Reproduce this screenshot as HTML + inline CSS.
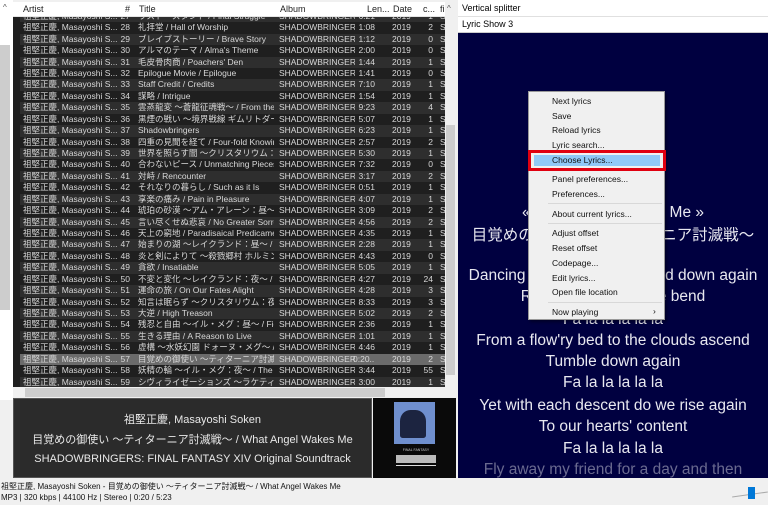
<!DOCTYPE html>
<html><head><meta charset="utf-8"><style>
*{margin:0;padding:0;box-sizing:border-box}
body{width:768px;height:505px;overflow:hidden;background:#f0f0f0;font-family:"Liberation Sans","Noto Sans CJK JP",sans-serif;position:relative}
.a{position:absolute}
.hdr{position:absolute;top:2px;left:13px;width:432px;height:15px;background:#fff;border-bottom:1px solid #e5e5e5;font-size:9px;color:#222;z-index:2}
.hdr span{position:absolute;top:2px}
.row{position:absolute;left:20px;width:425px;height:11.43px;font-size:8.5px;color:#d8d8d8;line-height:11.4px;white-space:nowrap;overflow:hidden}
.row span{position:absolute;top:0;overflow:hidden;white-space:nowrap}
.lyr{position:absolute;left:458px;width:310px;text-align:center;font-size:15.5px;color:#e8e8f0;white-space:nowrap}
.mi{position:absolute;left:552px;font-size:8.5px;color:#111}
.sep{position:absolute;left:548px;width:114px;height:1px;background:#d8d8d8}
</style></head><body>
<div class="a" style="left:0;top:0;width:13px;height:400px;background:#fff"></div>
<div class="a" style="left:0;top:45px;width:10px;height:265px;background:#cdcdcd"></div>
<div class="a" style="left:3px;top:3px;font-size:8px;color:#555">^</div>
<div class="a" style="left:13px;top:2px;width:432px;height:385px;background:#1e1e1e;overflow:hidden" id="list"></div>
<div class="hdr">
<span style="left:10px">Artist</span><span style="left:112px">#</span><span style="left:126px">Title</span><span style="left:267px">Album</span><span style="left:354px">Len...</span><span style="left:380px">Date</span><span style="left:410px">c...</span><span style="left:427px">fi</span>
</div>
<div id="rows"></div>
<div class="a" style="left:445px;top:2px;width:11px;height:385px;background:#f0f0f0"></div>
<div class="a" style="left:446px;top:125px;width:9px;height:250px;background:#cdcdcd"></div>
<div class="a" style="left:447px;top:4px;font-size:8px;color:#555">^</div>
<div class="a" style="left:13px;top:387px;width:443px;height:11px;background:#f0f0f0"></div>
<div class="a" style="left:25px;top:388px;width:360px;height:9px;background:#cdcdcd"></div>
<div class="a" style="left:13px;top:398px;width:359px;height:80px;background:#2b2b2b;border:1px solid #555;color:#e8e8e8;font-size:11px;text-align:center;line-height:19.5px;padding-top:12px">
祖堅正慶, Masayoshi Soken<br>目覚めの御使い 〜ティターニア討滅戦〜 / What Angel Wakes Me<br>SHADOWBRINGERS: FINAL FANTASY XIV Original Soundtrack</div>
<div class="a" style="left:373px;top:398px;width:83px;height:80px;background:#0a0a0a"></div>
<div class="a" style="left:394px;top:402px;width:41px;height:42px;background:#6f8fce"></div>
<div class="a" style="left:400px;top:410px;width:26px;height:28px;background:#1c2440;border-radius:40% 40% 10% 10%"></div>
<div class="a" style="left:396px;top:448px;width:40px;font-size:3.5px;color:#ccc;text-align:center">FINAL FANTASY</div>
<div class="a" style="left:396px;top:455px;width:40px;height:8px;background:#bbb"></div>
<div class="a" style="left:396px;top:465px;width:40px;height:1px;background:#ddd"></div>
<div class="a" style="left:458px;top:0;width:310px;height:17px;background:#fff;border-bottom:1px solid #e0e0e0;font-size:9px;padding:3px 4px">Vertical splitter</div>
<div class="a" style="left:458px;top:17px;width:310px;height:16px;background:#fff;border-bottom:1px solid #ccc;font-size:9px;padding:2px 4px">Lyric Show 3</div>
<div class="a" style="left:458px;top:33px;width:310px;height:445px;background:#000040"></div>
<div class="lyr" style="top:204px">« What Angel Wakes Me »</div>
<div class="lyr" style="top:223px">目覚めの御使い 〜ティターニア討滅戦〜</div>
<div class="lyr" style="top:267px">Dancing round and round and down again</div>
<div class="lyr" style="top:288px">Round and round the bend</div>
<div class="lyr" style="top:311px">Fa la la la la la</div>
<div class="lyr" style="top:332px">From a flow'ry bed to the clouds ascend</div>
<div class="lyr" style="top:353px">Tumble down again</div>
<div class="lyr" style="top:374px">Fa la la la la la</div>
<div class="lyr" style="top:397px">Yet with each descent do we rise again</div>
<div class="lyr" style="top:418px">To our hearts' content</div>
<div class="lyr" style="top:440px">Fa la la la la la</div>
<div class="lyr" style="top:461px;color:#6a6a90;height:17px;overflow:hidden">Fly away my friend for a day and then</div>
<div class="a" style="left:528px;top:91px;width:137px;height:229px;background:#f0f0f0;border:1px solid #999;box-shadow:2px 2px 3px rgba(0,0,0,.4)"></div>
<div class="a" style="left:528px;top:150px;width:138px;height:21px;border:3px solid #e00010"></div>
<div class="a" style="left:534px;top:155px;width:126px;height:11px;background:#91c9f7"></div>
<div class="mi" style="top:96px">Next lyrics</div>
<div class="mi" style="top:111px">Save</div>
<div class="mi" style="top:125px">Reload lyrics</div>
<div class="mi" style="top:140px">Lyric search...</div>
<div class="mi" style="top:155px">Choose Lyrics...</div>
<div class="mi" style="top:174px">Panel preferences...</div>
<div class="mi" style="top:189px">Preferences...</div>
<div class="sep" style="top:203px"></div>
<div class="mi" style="top:209px">About current lyrics...</div>
<div class="sep" style="top:223px"></div>
<div class="mi" style="top:228px">Adjust offset</div>
<div class="mi" style="top:243px">Reset offset</div>
<div class="mi" style="top:258px">Codepage...</div>
<div class="mi" style="top:273px">Edit lyrics...</div>
<div class="mi" style="top:287px">Open file location</div>
<div class="sep" style="top:302px"></div>
<div class="mi" style="top:307px">Now playing</div>
<div class="mi" style="top:306px;left:653px">›</div>
<div class="a" style="left:0;top:478px;width:768px;height:27px;background:#f0f0f0"></div>
<div class="a" style="left:1px;top:481px;font-size:8px;color:#111">祖堅正慶, Masayoshi Soken - 目覚めの御使い 〜ティターニア討滅戦〜 / What Angel Wakes Me</div>
<div class="a" style="left:1px;top:493px;font-size:8px;color:#111">MP3 | 320 kbps | 44100 Hz | Stereo | 0:20 / 5:23</div>
<div class="a" style="left:732px;top:494px;width:36px;height:1px;background:#aaa;transform:rotate(-8deg)"></div>
<div class="a" style="left:748px;top:487px;width:7px;height:12px;background:#0078d7"></div>
<script>
var d=[[27,"ラスト・スタンド / Final Struggle","6:21",1],[28,"礼拝堂 / Hall of Worship","1:08",2],[29,"ブレイブストーリー / Brave Story","1:12",0],[30,"アルマのテーマ / Alma's Theme","2:00",0],[31,"毛皮骨肉商 / Poachers' Den","1:44",1],[32,"Epilogue Movie / Epilogue","1:41",0],[33,"Staff Credit / Credits","7:10",1],[34,"謀略 / Intrigue","1:54",1],[35,"雲蒸龍変 ～蒼龍征魂戦～ / From the...","9:23",4],[36,"黒煙の戦い ～境界戦線 ギムリトダーク...","5:07",1],[37,"Shadowbringers","6:23",1],[38,"四重の見聞を経て / Four-fold Knowing","2:57",2],[39,"世界を照らす闇 ～クリスタリウム：昼～ ...","5:30",1],[40,"合わないピース / Unmatching Pieces","7:32",0],[41,"対峙 / Rencounter","3:17",2],[42,"それなりの暮らし / Such as it Is","0:51",1],[43,"享楽の痛み / Pain in Pleasure","4:07",1],[44,"琥珀の砂漠 ～アム・アレーン：昼～ / Sa...","3:09",2],[45,"言い尽くせぬ悲哀 / No Greater Sorrow","4:56",2],[46,"天上の窮地 / Paradisaical Predicame...","4:35",1],[47,"始まりの湖 ～レイクランド：昼～ / The ...","2:28",1],[48,"炎と剣によりて ～殺戮郷村 ホルミンスタ...","4:43",0],[49,"貪欲 / Insatiable","5:05",1],[50,"不変と変化 ～レイクランド：夜～ / Unc...","4:27",24],[51,"運命の旅 / On Our Fates Alight","4:28",3],[52,"知言は眠らず ～クリスタリウム：夜～ / ...","8:33",3],[53,"大逆 / High Treason","5:02",2],[54,"残忍と自由 ～イル・メグ：昼～ / Fierce...","2:36",1],[55,"生きる理由 / A Reason to Live","1:01",1],[56,"虚構 ～水妖幻園 ドォーヌ・メグ～ / Fig...","4:46",1],[57,"目覚めの御使い ～ティターニア討滅戦～...","0:20...",2],[58,"妖精の輪 ～イル・メグ：夜～ / The Fae...","3:44",55],[59,"シヴィライゼーションズ ～ラケティカ大森林...","3:00",1]];
var h="";d.forEach(function(r,i){var t=28+(r[0]-28)*11.43-5.7;var bg=r[0]==57?"#6b6b6b":(r[0]%2?"#2e2e2e":"#1f1f1f");
h+='<div class="row" style="top:'+t+'px;background:'+bg+'"><span style="left:3px;width:100px">祖堅正慶, Masayoshi S...</span><span style="left:96px;width:14px;text-align:right">'+r[0]+'</span><span style="left:118px;width:136px">'+r[1]+'</span><span style="left:259px;width:76px">SHADOWBRINGERS:...</span><span style="left:333px;width:22px;text-align:right">'+r[2]+'</span><span style="left:372px">2019</span><span style="left:400px;width:13px;text-align:right">'+r[3]+'</span><span style="left:420px">SI</span></div>';});
document.getElementById("rows").innerHTML=h;
</script>
</body></html>
